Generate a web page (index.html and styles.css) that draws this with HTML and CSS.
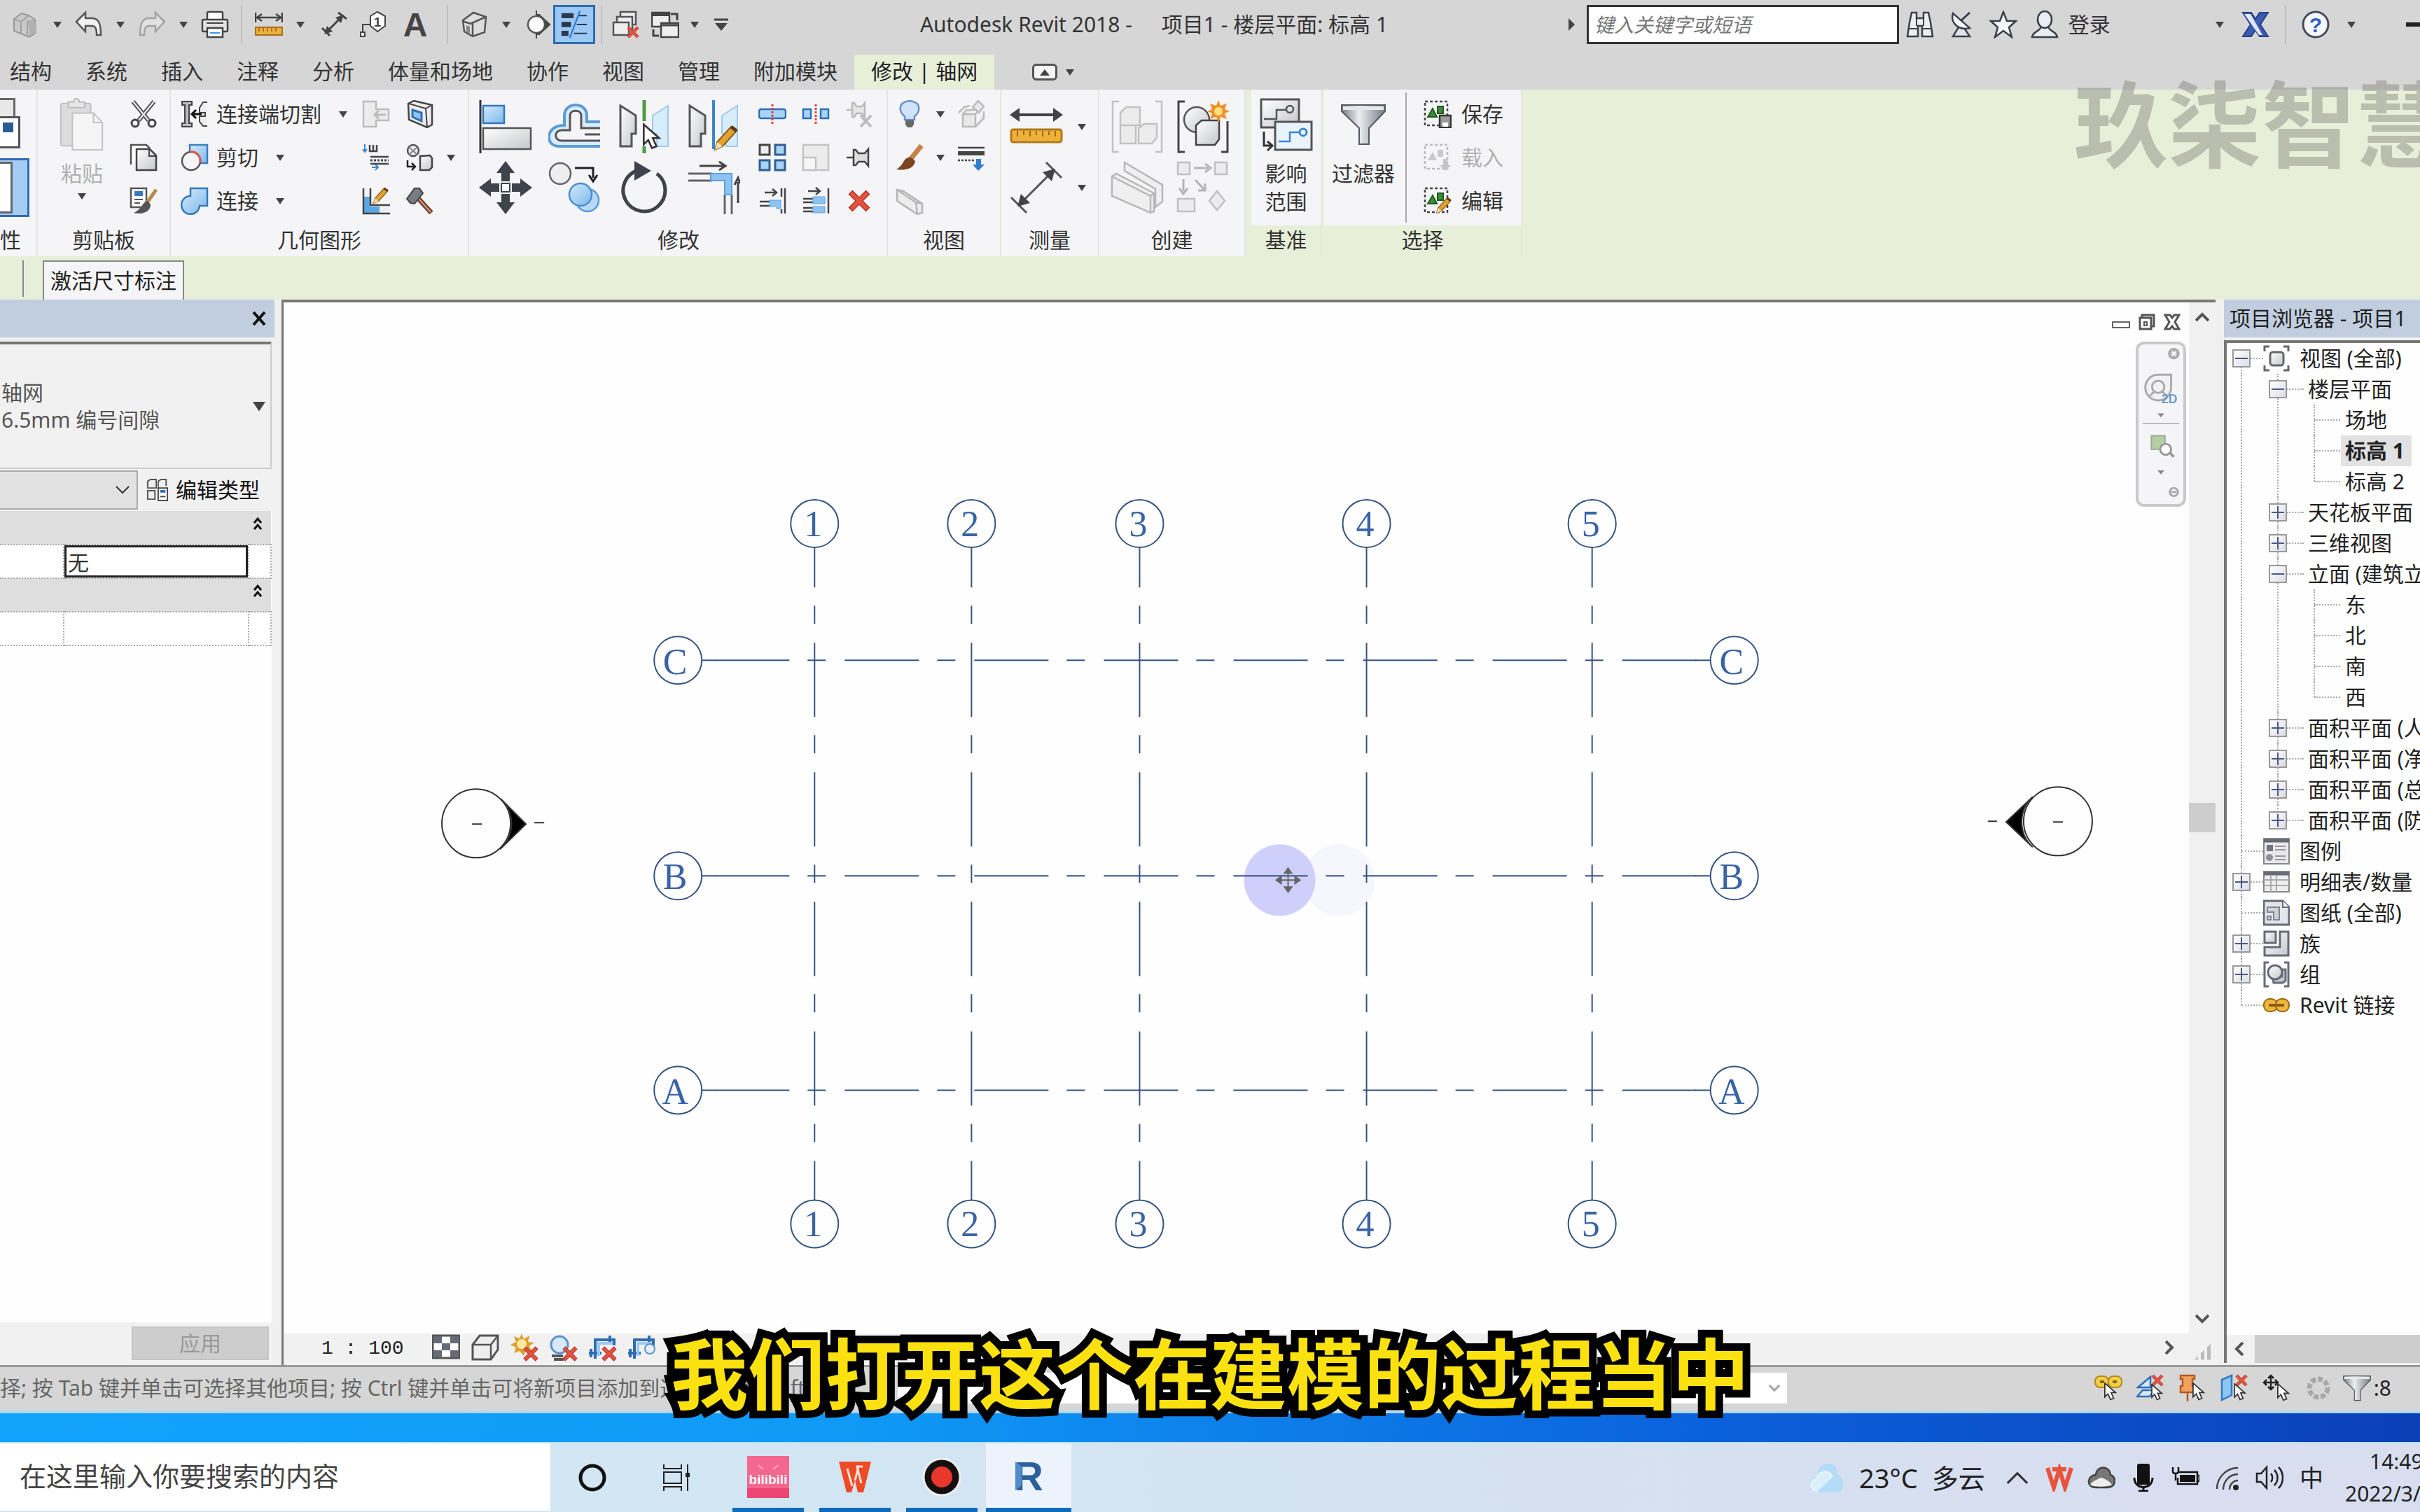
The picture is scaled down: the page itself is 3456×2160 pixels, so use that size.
FILE: index.html
```html
<!DOCTYPE html>
<html lang="zh-CN">
<head>
  <meta charset="UTF-8">
  <title>Autodesk Revit 2018 - 项目1 - 楼层平面: 标高 1</title>
  <link rel="stylesheet" href="styles.css">
</head>
<body>

<!-- icon sprite -->
<svg class="sprite">
  <defs>
    <linearGradient id="gr" x1="0" y1="0" x2="1" y2="1"><stop offset="0" stop-color="#fff"/><stop offset="1" stop-color="#c4c7cc"/></linearGradient>
    <linearGradient id="bl" x1="0" y1="0" x2="1" y2="1"><stop offset="0" stop-color="#d3ebfb"/><stop offset="1" stop-color="#7db9ea"/></linearGradient>
    <linearGradient id="me" x1="0" y1="0" x2="1" y2="0"><stop offset="0" stop-color="#777c85"/><stop offset=".4" stop-color="#eceef0"/><stop offset="1" stop-color="#777c85"/></linearGradient>

    <symbol id="caret" viewBox="0 0 12 12"><path d="M0 2h12L6 11z" fill="#444"/></symbol>
    <symbol id="pointer" viewBox="0 0 20 30"><path d="M1 1v22l5-5 4 9 5-2-4-9h7z" fill="#fff" stroke="#333" stroke-width="2"/></symbol>
    <symbol id="cross" viewBox="0 0 20 20"><path d="M4 1l6 6 6-6 3 3-6 6 6 6-3 3-6-6-6 6-3-3 6-6-6-6z" fill="#e2543f" stroke="#b9342a"/></symbol>
    <symbol id="pencil" viewBox="0 0 40 40"><path d="M4 36l3-11L27 3l8 6-20 22z" fill="#e2a42c" stroke="#8a5a1c" stroke-width="2"/><path d="M4 36l3-11 8 6z" fill="#f6dcae"/><path d="M27 3l8 6" stroke="#5f3b1d" stroke-width="5"/></symbol>

    <symbol id="cube" viewBox="0 0 40 40"><path d="M3 12l11-8 10 3 9 6v20l-8 5-10-4-12-5z" fill="#c9c9c9" stroke="#999" stroke-width="2"/><path d="M3 12l10 4v18M13 16l11-9M22 14v22M22 18l11-5" fill="none" stroke="#a3a3a3" stroke-width="2"/><path d="M23 14l12 5v13l-10 5z" fill="#b0b0b0"/></symbol>
    <symbol id="undo" viewBox="0 0 40 40"><path d="M2 16L15 3v8h9c9 0 13 6 13 24h-6c0-10-2-13-7-13h-9v8z" fill="#f2f2f2" stroke="#555" stroke-width="2.500"/></symbol>
    <symbol id="printer" viewBox="0 0 40 40"><rect x="9" y="2" width="22" height="14" rx="2" fill="#fff" stroke="#444" stroke-width="2.500"/><rect x="2" y="13" width="36" height="17" rx="2" fill="#e3e3e3" stroke="#444" stroke-width="2.500"/><path d="M8 18h24" stroke="#444" stroke-width="2"/><rect x="9" y="25" width="22" height="13" fill="#fff" stroke="#444" stroke-width="2.500"/><path d="M13 32h14" stroke="#39f" stroke-width="2"/></symbol>
    <symbol id="measure" viewBox="0 0 40 40"><path d="M4 10h32M10 5l-7 5 7 5M30 5l7 5-7 5M1 3v14M39 3v14" fill="none" stroke="#444" stroke-width="2.500"/><rect x="1" y="24" width="38" height="11" fill="#edb13c" stroke="#a8701b" stroke-width="2"/><path d="M6 25v5M12 25v5M18 25v5M24 25v5M30 25v5" stroke="#a8701b" stroke-width="2"/></symbol>
    <symbol id="dim" viewBox="0 0 40 40"><path d="M9 31L31 9M3 25l11 11M26 3l12 9" stroke="#444" stroke-width="3"/><path d="M6 34l4-12 8 8zM34 6l-4 12-8-8z" fill="#444"/></symbol>
    <symbol id="tag" viewBox="0 0 40 40"><path d="M26 2l11 6v14l-11 8-10-8V8z" fill="#fff" stroke="#444" stroke-width="2"/><text x="26" y="23" class="glyph" font-size="19" fill="#444">1</text><path d="M16 20H5v12" fill="none" stroke="#444" stroke-width="2"/><rect x="2" y="31" width="6" height="6" fill="#fff" stroke="#444" stroke-width="2"/></symbol>
    <symbol id="bigA" viewBox="0 0 40 40"><text x="20" y="37" class="glyph" font-size="48" fill="#444">A</text></symbol>
    <symbol id="house" viewBox="0 0 40 40"><path d="M3 14L18 3l18 6-2 22-17 6-12-7z" fill="#ddd" stroke="#555" stroke-width="2.500"/><path d="M2 15l12 4L36 9M17 18v18" fill="none" stroke="#555" stroke-width="2.500"/><path d="M8 21l5 2v10l-5-3z" fill="#888"/></symbol>
    <symbol id="section" viewBox="0 0 40 40"><path d="M18 0v6h4l15 14-15 14h-4v6" fill="#444" stroke="#444" stroke-width="2"/><circle cx="18" cy="20" r="12" fill="#fff" stroke="#555" stroke-width="2.500"/></symbol>
    <symbol id="thin" viewBox="0 0 44 44"><path d="M2 8h19M2 22h15M2 36h11" stroke="#2b3950" stroke-width="8"/><path d="M29 8h13M26 22h16M22 36h20" stroke="#2b3950" stroke-width="2"/><path d="M31 1L15 43" stroke="#2f7dd1" stroke-width="2.500"/></symbol>
    <symbol id="closewin" viewBox="0 0 40 40"><rect x="12" y="2" width="22" height="18" fill="#eee" stroke="#555" stroke-width="2.500"/><rect x="7" y="9" width="22" height="18" fill="#eee" stroke="#555" stroke-width="2.500"/><rect x="2" y="17" width="22" height="18" fill="#eee" stroke="#555" stroke-width="2.500"/><use href="#cross" x="21" y="22" width="18" height="18"/></symbol>
    <symbol id="switchwin" viewBox="0 0 40 40"><rect x="1" y="3" width="25" height="20" fill="#eee" stroke="#444" stroke-width="2.500"/><path d="M1 6h25" stroke="#444" stroke-width="4"/><rect x="14" y="18" width="25" height="20" fill="#eee" stroke="#444" stroke-width="2.500"/><path d="M14 21h25M28 5h9v9M3 27v9h8" fill="none" stroke="#444" stroke-width="3"/></symbol>
    <symbol id="custom" viewBox="0 0 20 20"><path d="M0 3h20" stroke="#444" stroke-width="3"/><path d="M1 8h18l-9 11z" fill="#444"/></symbol>
    <symbol id="binoc" viewBox="0 0 40 40"><path d="M8 3h7v8h10V3h7l3 14 3 20H23V22h-6v15H2l3-20z" fill="#eee" stroke="#3b4049" stroke-width="2.500"/><path d="M3 26h14M23 26h14M15 12v10M25 12v10" stroke="#3b4049" stroke-width="2"/></symbol>
    <symbol id="dish" viewBox="0 0 40 40"><path d="M16 24L8 37h24l-8-12" fill="#dfe3ea" stroke="#3b4049" stroke-width="2.500"/><path d="M8 4c-4 14 8 25 24 21z" fill="#f5f7fb" stroke="#3b4049" stroke-width="2.500"/><path d="M20 14l12-11" stroke="#3b4049" stroke-width="3"/></symbol>
    <symbol id="star" viewBox="0 0 40 40"><path d="M20 2l5 13h13L28 24l4 14-12-9-12 9 4-14L2 15h13z" fill="#f4f5f7" stroke="#3b4049" stroke-width="2.500"/></symbol>
    <symbol id="user" viewBox="0 0 40 40"><path d="M15 22c0 8-12 7-13 16h36c-1-9-13-8-13-16" fill="#e9edf3" stroke="#3b4049" stroke-width="2.500"/><ellipse cx="20" cy="13" rx="10" ry="12" fill="#e9edf3" stroke="#3b4049" stroke-width="2.500"/></symbol>
    <symbol id="exch" viewBox="0 0 40 40"><path d="M2 3h12l6 9 6-9h12L27 20l11 17H26l-6-9-6 9H2l11-17z" fill="#3b5bb0" stroke="#27408a" stroke-width="2"/><path d="M4 5h9l17 30h-5z" fill="#dfe7f8"/></symbol>
    <symbol id="help" viewBox="0 0 40 40"><circle cx="20" cy="20" r="18" fill="#f4f7fc" stroke="#454b57" stroke-width="3"/><text x="20" y="31" class="glyph" font-size="30" fill="#2d5ec4">?</text></symbol>

    <symbol id="paste" viewBox="0 0 64 78"><rect x="1" y="8" width="44" height="62" rx="3" fill="#dcdcdc" stroke="#c2c2c2" stroke-width="2"/><path d="M12 14V6h8c0-7 8-7 8 0h8v8z" fill="#e6e6e6" stroke="#bbb" stroke-width="2"/><path d="M18 22h31l13 14v40H18z" fill="#f5f5f5" stroke="#c2c2c2" stroke-width="2"/><path d="M49 22v14h13" fill="none" stroke="#c2c2c2" stroke-width="2"/></symbol>
    <symbol id="cut" viewBox="0 0 40 40"><path d="M5 2l22 27M35 2L13 29" stroke="#555" stroke-width="6"/><path d="M5 2l22 27M35 2L13 29" stroke="#eee" stroke-width="2"/><circle cx="8" cy="33" r="5" fill="none" stroke="#444" stroke-width="3"/><circle cx="32" cy="33" r="5" fill="none" stroke="#444" stroke-width="3"/></symbol>
    <symbol id="copy" viewBox="0 0 40 40"><path d="M2 30V2h22l5 5" fill="#fff" stroke="#555" stroke-width="2.500"/><path d="M10 8h19l9 9v21H10z" fill="url(#gr)" stroke="#444" stroke-width="2.500"/><path d="M28 8v10h10" fill="none" stroke="#444" stroke-width="2"/></symbol>
    <symbol id="match" viewBox="0 0 40 40"><rect x="2" y="2" width="22" height="27" fill="#fff" stroke="#555" stroke-width="2.500"/><rect x="7" y="6" width="12" height="7" fill="#3a76c4"/><path d="M7 18h12M7 23h8" stroke="#555" stroke-width="2"/><path d="M38 4L24 24" stroke="#b98a4a" stroke-width="5"/><path d="M26 20c-7 0-8 12-20 17 10 3 24 0 24-12z" fill="#555"/></symbol>
    <symbol id="cope" viewBox="0 0 40 40"><path d="M2 2h14v5h-4v26h4v5H2v-5h4V7H2z" fill="#bbb" stroke="#444" stroke-width="2"/><path d="M38 3h-6l-5 8v7h8v5h-8v8l5 6h6" fill="#eee" stroke="#444" stroke-width="2"/><path d="M30 20H17M22 14l-6 6 6 6" fill="none" stroke="#111" stroke-width="3"/></symbol>
    <symbol id="cutgeo" viewBox="0 0 40 40"><path d="M13 2h25v26H13z" fill="url(#bl)" stroke="#3d7fc0" stroke-width="2.500"/><circle cx="15" cy="25" r="13" fill="#f5f5f7" stroke="#555" stroke-width="2.500"/><path d="M13 12a13 13 0 0 1 15 15" fill="none" stroke="#e0564f" stroke-width="3"/></symbol>
    <symbol id="join" viewBox="0 0 40 40"><path d="M14 2h24v25H27a13 13 0 1 1-13-14z" fill="url(#bl)" stroke="#3677b8" stroke-width="2.500"/></symbol>
    <symbol id="split" viewBox="0 0 40 40"><path d="M2 2h18v11h18v16H20v9H2z" fill="#ececec" stroke="#bdbdbd" stroke-width="2.500"/><path d="M34 21H18M24 15l-6 6 6 6" fill="none" stroke="#bdbdbd" stroke-width="3"/></symbol>
    <symbol id="wallopen" viewBox="0 0 40 40"><path d="M4 5l8-4 26 6v28l-7 4L5 28z" fill="#eee" stroke="#444" stroke-width="2.500"/><path d="M5 5l24 7 2 26M29 12l9-5" fill="none" stroke="#444" stroke-width="2"/><path d="M10 14l13 4v12l-13-6z" fill="#8fc4ef" stroke="#2f6fb5" stroke-width="3"/></symbol>
    <symbol id="beam" viewBox="0 0 40 40"><path d="M4 1v10M1 8l3 4 3-4M14 34h8M19 30l4 4-4 4" fill="none" stroke="#3c86cf" stroke-width="2"/><path d="M11 2v9h10V2M16 2v9" fill="none" stroke="#444" stroke-width="2.500"/><path d="M12 19h26M12 29h26" stroke="#444" stroke-width="2.500"/><path d="M12 24h26" stroke="#444" stroke-width="3" stroke-dasharray="3 2"/></symbol>
    <symbol id="paintface" viewBox="0 0 40 40"><circle cx="11" cy="10" r="8" fill="#eee" stroke="#555" stroke-width="2.500"/><path d="M5 5l12 11M5 16L17 5" stroke="#888" stroke-width="2"/><path d="M21 18l14-1 3 4v13l-4 4H21z" fill="url(#gr)" stroke="#444" stroke-width="2.500"/><path d="M3 24v9h10M9 28l5 5-5 5" fill="none" stroke="#222" stroke-width="2.500"/></symbol>
    <symbol id="walljoin" viewBox="0 0 40 40"><path d="M3 2h8v26h27v9H3z" fill="#f0f0f0"/><path d="M3 14h8v14h14v9H3z" fill="#5ba7e6"/><path d="M2 2v36h38M12 2v24h28" fill="none" stroke="#444" stroke-width="2.500"/><use href="#pencil" x="14" y="0" width="26" height="26"/></symbol>
    <symbol id="hammer" viewBox="0 0 40 40"><path d="M17 15l20 22" stroke="#6f3f2a" stroke-width="7"/><path d="M18 16l18 20" stroke="#d0a08a" stroke-width="2"/><path d="M2 17L13 2h7l5 7-12 15-6-1z" fill="#777b82" stroke="#444" stroke-width="2"/></symbol>

    <symbol id="align" viewBox="0 0 76 76"><path d="M2 0v76" stroke="#333" stroke-width="3"/><rect x="6" y="8" width="30" height="25" fill="url(#bl)" stroke="#3277ba" stroke-width="2.500"/><rect x="6" y="40" width="68" height="30" fill="url(#gr)" stroke="#555" stroke-width="2.500"/></symbol>
    <symbol id="offset" viewBox="0 0 76 76"><path d="M74 31H55V22C55 2 23 2 23 22v14c-28 0-28 30-8 30h59" fill="#d9ecfb" stroke="#5b9bd8" stroke-width="4"/><path d="M74 40H47V22c0-9-16-9-16 0v21H19c-11 0-11 15 0 15h55M74 49H52" fill="#f5f5f7" stroke="#555" stroke-width="3"/></symbol>
    <symbol id="mirrorpick" viewBox="0 0 76 76"><path d="M4 8l22 14v26h-6v18H4z" fill="url(#gr)" stroke="#555" stroke-width="3"/><path d="M72 8L50 22v26h6v18h16z" fill="#d8edfb" stroke="#9ccaf0" stroke-width="2"/><path d="M38 0v30M38 66v10" stroke="#4c9b45" stroke-width="5"/><use href="#pointer" x="36" y="32" width="26" height="42"/></symbol>
    <symbol id="mirrordraw" viewBox="0 0 76 76"><path d="M4 8l22 14v26h-6v18H4z" fill="url(#gr)" stroke="#555" stroke-width="3"/><path d="M72 8L50 22v26h6v18h16z" fill="#d8edfb" stroke="#9ccaf0" stroke-width="2"/><path d="M38 0v70" stroke="#3c86cf" stroke-width="4"/><use href="#pencil" x="36" y="34" width="40" height="42"/></symbol>
    <symbol id="move" viewBox="0 0 76 76"><path d="M38 0l13 17h-7v12H32V17h-7zM38 76l13-17h-7V47H32v12h-7zM0 38l17-13v7h12v12H17v7zM76 38L59 25v7H47v12h12v7z" fill="#3f434b"/><rect x="32" y="32" width="12" height="12" fill="#fff" stroke="#3f434b" stroke-width="2"/></symbol>
    <symbol id="copyel" viewBox="0 0 76 76"><circle cx="17" cy="18" r="15" fill="#eee" stroke="#666" stroke-width="2.500"/><path d="M38 10h26v14M58 20l6 9 6-9" fill="none" stroke="#222" stroke-width="3"/><circle cx="56" cy="56" r="16" fill="#b9daf5" stroke="#5a9ad4" stroke-width="2.500"/><circle cx="46" cy="48" r="16" fill="url(#bl)" stroke="#4a8fd0" stroke-width="2.500"/></symbol>
    <symbol id="rotate" viewBox="0 0 76 76"><path d="M56 18A30 30 0 1 1 30 13" fill="none" stroke="#3f434b" stroke-width="5"/><path d="M24 0l24 14-24 14z" fill="#3f434b"/></symbol>
    <symbol id="trimcorner" viewBox="0 0 76 76"><path d="M2 18h34M2 28h34M54 48v28M64 48v28" stroke="#666" stroke-width="3"/><path d="M34 18h30v30H54V28H34z" fill="#8cc3f1" stroke="#5aa0e0" stroke-width="2"/><path d="M18 7h34M46 1l9 6-9 6M73 60V30M68 34l5-10 3 8" fill="none" stroke="#444" stroke-width="3"/></symbol>
    <symbol id="splitel" viewBox="0 0 40 40"><rect x="1" y="13" width="38" height="13" rx="3" fill="#a9d3f5" stroke="#2f6fb5" stroke-width="2.500"/><path d="M20 6v28" stroke="#d7443e" stroke-width="3" stroke-dasharray="3 2"/></symbol>
    <symbol id="splitgap" viewBox="0 0 40 40"><rect x="2" y="13" width="11" height="13" fill="#a9d3f5" stroke="#2f6fb5" stroke-width="2.500"/><rect x="27" y="13" width="11" height="13" fill="#a9d3f5" stroke="#2f6fb5" stroke-width="2.500"/><path d="M20 6v28" stroke="#d7443e" stroke-width="3" stroke-dasharray="3 2"/></symbol>
    <symbol id="unpin" viewBox="0 0 40 40"><path d="M2 14h8M10 4v20h3l3-5h8l4 5V4l-4 5h-8l-3-5z" fill="#e6e6e6" stroke="#bbb" stroke-width="2.500"/><path d="M22 22l15 16M37 22L22 38" stroke="#bdbdbd" stroke-width="4"/></symbol>
    <symbol id="pin" viewBox="0 0 40 40"><path d="M2 20h10M12 9v22h3l4-5h9l5 6V8l-5 6h-9l-4-5z" fill="#ddd" stroke="#444" stroke-width="2.500"/></symbol>
    <symbol id="array" viewBox="0 0 40 40"><rect x="2" y="2" width="14" height="14" fill="#eee" stroke="#444" stroke-width="3"/><g fill="#a9d3f5" stroke="#2f5f93" stroke-width="3"><rect x="24" y="2" width="14" height="14"/><rect x="2" y="24" width="14" height="14"/><rect x="24" y="24" width="14" height="14"/></g></symbol>
    <symbol id="scale" viewBox="0 0 40 40"><path d="M2 2h36v36H2z" fill="#ececec" stroke="#c4c4c4" stroke-width="2.500"/><path d="M2 20h18v18H2z" fill="#f7f7f7" stroke="#c4c4c4" stroke-width="2.500"/></symbol>
    <symbol id="trim1" viewBox="0 0 40 40"><path d="M38 2v36M33 2v12M9 8h16M20 3l6 5-6 5M2 21h14M2 27h14M33 32v6" fill="none" stroke="#444" stroke-width="2.500"/><path d="M16 19h16v12h-6v-3H16z" fill="#8cc3f1" stroke="#5aa0e0"/></symbol>
    <symbol id="trim2" viewBox="0 0 40 40"><path d="M38 2v36M9 6h16M20 1l6 5-6 5M2 17h14M2 22h14M2 30h14M2 35h14" fill="none" stroke="#444" stroke-width="2.500"/><path d="M16 14h17v10H16zM16 28h17v9H16z" fill="#8cc3f1" stroke="#5aa0e0"/></symbol>
    <symbol id="bulb" viewBox="0 0 40 40"><path d="M20 1c-18 2-15 17-7 22v5h14v-5c8-5 11-20-7-22z" fill="#cfe3fb" stroke="#6a8fc6" stroke-width="2.500"/><path d="M14 29h12v6l-3 4h-6l-3-4z" fill="#666"/></symbol>
    <symbol id="brush" viewBox="0 0 40 40"><path d="M37 3L20 24" stroke="#c78247" stroke-width="7"/><path d="M22 20C11 18 12 32 1 37c12 2 26-1 27-12z" fill="#7b4522"/></symbol>
    <symbol id="hidebox" viewBox="0 0 40 40"><path d="M2 18l8-8 8-2M8 20h18v18H8zM8 20l5-6h13M26 20l4-5M22 10l8-9 8 8-7 9zM26 38l12-12V16" fill="#e8e8e8" stroke="#bbb" stroke-width="2.500"/></symbol>
    <symbol id="linework" viewBox="0 0 40 40"><path d="M1 6h38" stroke="#444" stroke-width="2.500"/><path d="M1 14h38" stroke="#444" stroke-width="6"/><path d="M1 24h24" stroke="#444" stroke-width="2.500" stroke-dasharray="3 2"/><path d="M27 22h7v8h5l-9 9-8-9h5z" fill="#2f7dd1"/></symbol>
    <symbol id="sect" viewBox="0 0 40 40"><path d="M2 4l9 2 27 18v13l-7 2L2 20zM2 4l27 18 9 2M29 22l2 17" fill="#ededed" stroke="#b5b5b5" stroke-width="2.500"/></symbol>
    <symbol id="ruler" viewBox="0 0 76 60"><path d="M6 13h64" stroke="#444" stroke-width="4"/><path d="M0 13L14 3v20zM76 13L62 3v20z" fill="#444"/><rect x="2" y="34" width="72" height="18" rx="3" fill="#efb13a" stroke="#b07a1c" stroke-width="3"/><path d="M11 36v8M20 36v6M29 36v8M38 36v6M47 36v8M56 36v6M65 36v8" stroke="#9a6916" stroke-width="2"/></symbol>
    <symbol id="aligned" viewBox="0 0 76 76"><path d="M15 61L61 15M2 52l22 22M52 2l22 22" stroke="#555" stroke-width="3"/><path d="M11 65l5-18 13 13zM65 11l-5 18-13-13z" fill="#444"/></symbol>
    <symbol id="assembly" viewBox="0 0 76 76"><path d="M12 2H3v72h9M64 2h9v72h-9" fill="none" stroke="#c2c2c2" stroke-width="2.500"/><path d="M14 18l8-8h20v26H14zM14 36h22v26H14zM40 40l8-6h18v20l-7 8H40z" fill="#ececec" stroke="#c2c2c2" stroke-width="2.500"/></symbol>
    <symbol id="group" viewBox="0 0 76 76"><path d="M12 2H3v72h9M64 74h9V30" fill="none" stroke="#444" stroke-width="3"/><circle cx="29" cy="28" r="18" fill="url(#gr)" stroke="#555" stroke-width="2.500"/><path d="M28 36l8-7h25v27l-6 8H28z" fill="url(#gr)" stroke="#444" stroke-width="2.500"/><path d="M60 0l3 8 9-3-3 8 7 3-7 3 3 8-9-3-3 8-3-8-9 3 3-8-7-3 7-3-3-8 9 3z" fill="#f0902a"/><circle cx="60" cy="16" r="6" fill="#ffe27a"/></symbol>
    <symbol id="parts" viewBox="0 0 76 76"><path d="M20 2l54 32v24l-10 8V40L20 14z" fill="#efefef" stroke="#b8b8b8" stroke-width="2.500"/><path d="M2 22l6-4 54 28v26l-5 2L2 50zM2 22l55 28v24M57 50l5-4" fill="#efefef" stroke="#b8b8b8" stroke-width="2.500"/></symbol>
    <symbol id="similar" viewBox="0 0 76 76"><path d="M2 2h17v17H2zM55 2h17v17H55zM2 54h24v18H2zM58 43l11 14-11 13-11-13z" fill="#ececec" stroke="#c0c0c0" stroke-width="2.500"/><path d="M25 10h20M41 4l8 6-8 6M10 26v17M4 39l6 8 6-8M27 27l13 14M41 32v10h-10" fill="none" stroke="#b5b5b5" stroke-width="3"/></symbol>
    <symbol id="propagate" viewBox="0 0 76 76"><rect x="2" y="2" width="54" height="40" fill="url(#gr)" stroke="#555" stroke-width="3"/><path d="M6 30h18V17h14" fill="none" stroke="#555" stroke-width="2.500"/><circle cx="43" cy="16" r="5" fill="none" stroke="#555" stroke-width="2.500"/><rect x="22" y="34" width="52" height="40" fill="#e9f3fc" stroke="#555" stroke-width="3"/><path d="M27 62h16V49h15" fill="none" stroke="#3c86cf" stroke-width="2.500"/><circle cx="62" cy="49" r="5" fill="none" stroke="#3c86cf" stroke-width="3"/><path d="M6 48v20h10M11 62l7 6-7 7" fill="none" stroke="#333" stroke-width="3"/></symbol>
    <symbol id="filter" viewBox="0 0 64 60"><path d="M1 2h62v9L40 35v23H26V35L1 11z" fill="url(#me)" stroke="#565a62" stroke-width="2"/><path d="M3 4h58v5H3z" fill="#e7e9ec"/></symbol>
    <symbol id="selset" viewBox="0 0 40 40"><path d="M2 2h32v34H2z" fill="none" stroke="#444" stroke-width="2.500" stroke-dasharray="4 3"/><path d="M6 24l7-12 6 12zM20 9h8v10h-8z" fill="#3b8d35" stroke="#1f5a1d" stroke-width="2"/></symbol>
    <symbol id="save" viewBox="0 0 40 40"><use href="#selset"/><rect x="23" y="22" width="16" height="17" fill="#999" stroke="#333" stroke-width="2.500"/><path d="M27 32h8v6h-8z" fill="#fff"/></symbol>
    <symbol id="load" viewBox="0 0 40 40"><path d="M2 2h32v34H2z" fill="none" stroke="#bbb" stroke-width="2.500" stroke-dasharray="4 3"/><path d="M6 24l7-12 6 12zM20 9h8v10h-8z" fill="#c9c9c9"/><path d="M28 22h6v9h5l-8 8-8-8h5z" fill="#c4c4c4"/></symbol>
    <symbol id="editset" viewBox="0 0 40 40"><use href="#selset"/><use href="#pencil" x="16" y="14" width="26" height="26"/></symbol>

    <symbol id="edittype" viewBox="0 0 34 34"><path d="M2 4l4-3h9v13H2zM18 14V4l4-3h8v10M2 18h11v13H2z" fill="#eee" stroke="#555" stroke-width="2"/><rect x="18" y="14" width="14" height="19" fill="#fff" stroke="#444" stroke-width="2"/><path d="M21 19h8" stroke="#2f6fb5" stroke-width="4"/><path d="M21 27h8" stroke="#444" stroke-width="2"/></symbol>
    <symbol id="dblup" viewBox="0 0 12 20"><path d="M1 9l5-6 5 6M1 18l5-6 5 6" fill="none" stroke="#111" stroke-width="3"/></symbol>
    <symbol id="x" viewBox="0 0 20 20"><path d="M2 1l16 18M18 1L2 19" stroke="#111" stroke-width="4"/></symbol>
    <symbol id="up" viewBox="0 0 20 14"><path d="M1 12L10 3l9 9" fill="none" stroke="#555" stroke-width="4"/></symbol>
    <symbol id="upthin" viewBox="0 0 20 14"><path d="M1 12L10 3l9 9" fill="none" stroke="#333" stroke-width="2"/></symbol>

    <symbol id="t-view" viewBox="0 0 38 38"><path d="M2 9V2h7M29 2h7v7M36 29v7h-7M9 36H2v-7" fill="none" stroke="#666" stroke-width="3"/><rect x="10" y="10" width="19" height="19" rx="4" fill="url(#gr)" stroke="#666" stroke-width="3"/></symbol>
    <symbol id="t-legend" viewBox="0 0 38 38"><rect x="1" y="1" width="36" height="36" fill="#e9e9ec" stroke="#888" stroke-width="2"/><path d="M1 4h36" stroke="#666b76" stroke-width="5"/><rect x="5" y="10" width="9" height="9" fill="#70757f"/><circle cx="9" cy="28" r="5" fill="#8a8f98"/><path d="M17 12h15M17 17h15M17 26h15M17 31h15" stroke="#999" stroke-width="2"/></symbol>
    <symbol id="t-sched" viewBox="0 0 38 38"><rect x="1" y="4" width="36" height="29" fill="#eeeef0" stroke="#888" stroke-width="2"/><path d="M1 7h36" stroke="#666b76" stroke-width="5"/><path d="M1 16h36M1 24h36M11 9v24M19 9v24" stroke="#aaa" stroke-width="2"/></symbol>
    <symbol id="t-sheet" viewBox="0 0 38 38"><path d="M1 2h27l9 9v25H1z" fill="#e3e6ea" stroke="#666b76" stroke-width="3"/><path d="M28 2v9h9" fill="#fff" stroke="#666b76" stroke-width="2"/><path d="M6 11h17v18h-8V18H6zM6 24h5v5H6z" fill="#cfd3d9" stroke="#80858f" stroke-width="2"/></symbol>
    <symbol id="t-fam" viewBox="0 0 38 38"><rect x="2" y="2" width="16" height="16" fill="url(#gr)" stroke="#666b76" stroke-width="3"/><path d="M24 2h12v34H2V24h22z" fill="url(#gr)" stroke="#666b76" stroke-width="3"/></symbol>
    <symbol id="t-group" viewBox="0 0 38 38"><path d="M8 2H2v34h6M30 2h6v34h-6" fill="none" stroke="#666b76" stroke-width="3"/><path d="M13 22h14V12h5v16l-4 3H15z" fill="#c5c9cf" stroke="#666b76" stroke-width="3"/><circle cx="17" cy="16" r="10" fill="url(#gr)" stroke="#666b76" stroke-width="3"/></symbol>
    <symbol id="t-link" viewBox="0 0 38 38"><rect x="1" y="10" width="19" height="18" rx="8" fill="#eeb63e" stroke="#9b6a14" stroke-width="2"/><rect x="18" y="10" width="19" height="18" rx="8" fill="#eeb63e" stroke="#9b6a14" stroke-width="2"/><path d="M8 19h22" stroke="#8a5c10" stroke-width="4"/></symbol>

    <symbol id="v-detail" viewBox="0 0 40 40"><rect x="1" y="3" width="38" height="32" fill="#fff" stroke="#555" stroke-width="3"/><path d="M2 4h12v10H2zM26 4h12v10H26zM14 14h12v10H14zM2 24h12v10H2zM26 24h12v10H26z" fill="#666b75"/></symbol>
    <symbol id="v-box" viewBox="0 0 40 40"><path d="M2 16L12 3h26v20L28 37H2z" fill="#eee" stroke="#555" stroke-width="3"/><path d="M2 16h26v21M28 16L38 3" fill="none" stroke="#555" stroke-width="2.500"/></symbol>
    <symbol id="v-sun" viewBox="0 0 40 40"><path d="M16 0l3 8 8-5-2 9 9 1-7 5 4 8-9-2-3 8-6-7-8 3 3-8-8-4 8-4-3-8 8 3z" fill="#d9a02c"/><circle cx="16" cy="15" r="7" fill="#ffe9a0"/><use href="#cross" x="18" y="18" width="22" height="22"/></symbol>
    <symbol id="v-shadow" viewBox="0 0 40 40"><circle cx="14" cy="16" r="12" fill="#d6e8fa" stroke="#5e93cf" stroke-width="3"/><path d="M3 32h16M6 37h14" stroke="#555" stroke-width="4"/><use href="#cross" x="18" y="18" width="22" height="22"/></symbol>
    <symbol id="v-crop" viewBox="0 0 40 40"><path d="M9 36V9h27v8M0 28h18M30 3v12M3 22v12" fill="none" stroke="#2f6cb2" stroke-width="4"/><path d="M14 32V14h20" fill="none" stroke="#9ccaf0" stroke-width="4"/></symbol>

    <symbol id="s-move" viewBox="0 0 40 40"><path d="M12 2v20M2 12h20M8 6l4-4 4 4M8 18l4 4 4-4M6 8l-4 4 4 4M18 8l4 4-4 4" fill="none" stroke="#222" stroke-width="2.500"/><use href="#pointer" x="21" y="13" width="18" height="27"/></symbol>
    <symbol id="s-link" viewBox="0 0 40 40"><rect x="1" y="3" width="19" height="16" rx="7" fill="#f2cf4a" stroke="#b38a1b" stroke-width="2"/><rect x="20" y="3" width="19" height="16" rx="7" fill="#f2cf4a" stroke="#b38a1b" stroke-width="2"/><path d="M8 11h6M26 11h6" stroke="#8a6a14" stroke-width="4"/><use href="#pointer" x="14" y="12" width="18" height="27"/></symbol>
    <symbol id="s-under" viewBox="0 0 40 40"><path d="M2 19L20 4v15zM1 32l8-9h16l-6 9z" fill="#d2e8fa" stroke="#2f6fb5" stroke-width="2.500"/><use href="#cross" x="21" y="0" width="18" height="18"/><use href="#pointer" x="21" y="14" width="17" height="25"/></symbol>
    <symbol id="s-pin" viewBox="0 0 40 40"><path d="M3 2h20v5h-3v10h3v9H3v-9h3V7H3zM13 26v13" fill="#f2a25e" stroke="#b4581c" stroke-width="2.500"/><use href="#pointer" x="20" y="12" width="18" height="27"/></symbol>
    <symbol id="s-face" viewBox="0 0 40 40"><path d="M2 8l14-6v28L2 37z" fill="#8dc6f4" stroke="#2f7dc4" stroke-width="2.500"/><use href="#cross" x="21" y="0" width="18" height="18"/><use href="#pointer" x="19" y="13" width="18" height="26"/></symbol>
    <symbol id="s-busy" viewBox="0 0 40 40"><circle cx="20" cy="20" r="13" fill="none" stroke="#a8a8a8" stroke-width="7" stroke-dasharray="7 3"/></symbol>

    <symbol id="wps" viewBox="0 0 48 48"><path d="M1 2h46l-11 44h-8l-4-17-5 17h-7z" fill="#ee4a26"/><path d="M13 12l7 25M35 9h-8l6 24M24 29l5-20" fill="none" stroke="#ffe3d6" stroke-width="3"/></symbol>
    <symbol id="wps-s" viewBox="0 0 40 40"><path d="M3 6l9 28 8-26 8 26 9-28M10 8h20" fill="none" stroke="#e8533c" stroke-width="6"/></symbol>
    <symbol id="cloud" viewBox="0 0 54 50"><path d="M14 48c-17 0-16-24-1-24C12-4 48-3 44 20c14 4 12 28 0 28z" fill="#b4dcf8"/><path d="M14 46c-14 0-13-19-1-19 2-16 22-14 23-2" fill="#d9effc" stroke="#e6f5ff" stroke-width="3"/></symbol>
    <symbol id="cloud2" viewBox="0 0 40 40"><path d="M12 34c-14 0-13-17 0-18 1-14 20-14 21 0 9 2 8 18-3 18z" fill="#777" stroke="#444" stroke-width="2.500"/><path d="M4 30c3 3 22 4 31 0-2-4-10-9-16-10-6 3-12 5-15 10z" fill="#eee"/></symbol>
    <symbol id="mic" viewBox="0 0 40 40"><rect x="11" y="0" width="18" height="30" rx="3" fill="#111"/><path d="M7 20c0 18 26 18 26 0M20 33v6M13 39h14" fill="none" stroke="#111" stroke-width="3"/></symbol>
    <symbol id="battery" viewBox="0 0 40 40"><path d="M11 12h26v17H9V20M37 17h3v8h-3" fill="none" stroke="#111" stroke-width="2.500"/><rect x="12" y="16" width="22" height="10" fill="#111"/><path d="M2 5v6c0 4 8 4 8 0V5M6 14v10" fill="none" stroke="#111" stroke-width="2.500"/></symbol>
    <symbol id="wifi" viewBox="0 0 40 40"><path d="M5 36C5 20 18 6 35 6M14 37c0-12 9-22 21-22M23 37c0-7 5-13 12-13" fill="none" stroke="#444" stroke-width="2.500"/><circle cx="32" cy="34" r="4" fill="#222"/></symbol>
    <symbol id="volume" viewBox="0 0 40 40"><path d="M2 14h6l8-9v30l-8-9H2zM22 14c3 3 3 9 0 12M27 9c6 6 6 16 0 22M33 5c8 8 8 22 0 30" fill="none" stroke="#222" stroke-width="2.500"/></symbol>
  </defs>
</svg>

<header>
  <div class="titlebar">
    <div class="quick">
      <button class="w45"><svg><use href="#cube"/></svg></button>
      <button class="w45 caret"><svg><use href="#caret"/></svg></button>
      <button class="w45"><svg><use href="#undo"/></svg></button>
      <button class="w45 caret"><svg><use href="#caret"/></svg></button>
      <button class="w45 redo"><svg><use href="#undo"/></svg></button>
      <button class="w45 caret"><svg><use href="#caret"/></svg></button>
      <button class="w45"><svg><use href="#printer"/></svg></button>
      <span class="sep"></span>
      <button class="w45"><svg><use href="#measure"/></svg></button>
      <button class="w45 caret"><svg><use href="#caret"/></svg></button>
      <button class="w52"><svg><use href="#dim"/></svg></button>
      <button class="w60"><svg><use href="#tag"/></svg></button>
      <button class="w60"><svg><use href="#bigA"/></svg></button>
      <span class="sep"></span>
      <button class="w45"><svg><use href="#house"/></svg></button>
      <button class="w45 caret"><svg><use href="#caret"/></svg></button>
      <button class="w45"><svg><use href="#section"/></svg></button>
      <button class="w60 pressed"><svg><use href="#thin"/></svg></button>
      <span class="sep narrow"></span>
      <button class="w52"><svg><use href="#closewin"/></svg></button>
      <button class="w60"><svg><use href="#switchwin"/></svg></button>
      <button class="w24 caret"><svg><use href="#caret"/></svg></button>
      <button class="w52 custom"><svg><use href="#custom"/></svg></button>
    </div>
    <div class="title"><span>Autodesk Revit 2018 -</span><span>项目1 - 楼层平面: 标高 1</span></div>
    <div class="infocenter">
      <span class="tri"></span>
      <input type="text" class="keyword" placeholder="键入关键字或短语" aria-label="键入关键字或短语">
      <button class="w60"><svg><use href="#binoc"/></svg></button>
      <button class="w60"><svg><use href="#dish"/></svg></button>
      <button class="w60"><svg><use href="#star"/></svg></button>
      <button class="w60"><svg><use href="#user"/></svg></button>
      <button class="login">登录</button>
      <button class="w52 caret"><svg><use href="#caret"/></svg></button>
      <button class="w52"><svg><use href="#exch"/></svg></button>
      <span class="sep"></span>
      <button class="w52"><svg><use href="#help"/></svg></button>
      <button class="w52 caret"><svg><use href="#caret"/></svg></button>
      <button class="minimize" aria-label="最小化"></button>
    </div>
  </div>

  <nav class="tabs">
    <a href="#">结构</a><a href="#">系统</a><a href="#">插入</a><a href="#">注释</a><a href="#">分析</a><a href="#">体量和场地</a><a href="#">协作</a><a href="#">视图</a><a href="#">管理</a><a href="#">附加模块</a><a href="#" class="active">修改 | 轴网</a>
    <button class="collapse"><span></span></button>
    <button class="w24 caret"><svg><use href="#caret"/></svg></button>
  </nav>

  <div class="ribbon">
    <section class="panel p-prop">
      <div class="tools">
        <div class="halfcard"><i></i><b></b></div>
        <div class="halfcard on"><i></i></div>
      </div>
      <h2>性</h2>
    </section>

    <section class="panel p-clip">
      <div class="tools">
        <button class="big-label paste"><svg><use href="#paste"/></svg><span>粘贴</span><svg class="c"><use href="#caret"/></svg></button>
        <div class="col">
          <button><svg><use href="#cut"/></svg></button>
          <button><svg><use href="#copy"/></svg></button>
          <button><svg><use href="#match"/></svg></button>
        </div>
      </div>
      <h2>剪贴板</h2>
    </section>

    <section class="panel p-geo">
      <div class="tools">
        <div class="col labels">
          <button><svg><use href="#cope"/></svg>连接端切割<svg class="c"><use href="#caret"/></svg></button>
          <button><svg><use href="#cutgeo"/></svg>剪切<svg class="c"><use href="#caret"/></svg></button>
          <button><svg><use href="#join"/></svg>连接<svg class="c"><use href="#caret"/></svg></button>
        </div>
        <div class="col">
          <button><svg><use href="#split"/></svg></button>
          <button><svg><use href="#beam"/></svg></button>
          <button><svg><use href="#walljoin"/></svg></button>
        </div>
        <div class="col">
          <button><svg><use href="#wallopen"/></svg></button>
          <button><svg><use href="#paintface"/></svg></button>
          <button><svg><use href="#hammer"/></svg></button>
        </div>
        <div class="col carets">
          <span></span>
          <button><svg class="c"><use href="#caret"/></svg></button>
        </div>
      </div>
      <h2>几何图形</h2>
    </section>

    <section class="panel p-mod">
      <div class="tools">
        <div class="bigs">
          <button><svg><use href="#align"/></svg></button>
          <button><svg><use href="#offset"/></svg></button>
          <button><svg><use href="#mirrorpick"/></svg></button>
          <button><svg><use href="#mirrordraw"/></svg></button>
          <button><svg><use href="#move"/></svg></button>
          <button><svg><use href="#copyel"/></svg></button>
          <button><svg><use href="#rotate"/></svg></button>
          <button><svg><use href="#trimcorner"/></svg></button>
        </div>
        <div class="col">
          <button><svg><use href="#splitel"/></svg></button>
          <button><svg><use href="#array"/></svg></button>
          <button><svg><use href="#trim1"/></svg></button>
        </div>
        <div class="col">
          <button><svg><use href="#splitgap"/></svg></button>
          <button><svg><use href="#scale"/></svg></button>
          <button><svg><use href="#trim2"/></svg></button>
        </div>
        <div class="col">
          <button><svg><use href="#unpin"/></svg></button>
          <button><svg><use href="#pin"/></svg></button>
          <button><svg class="del"><use href="#cross"/></svg></button>
        </div>
      </div>
      <h2>修改</h2>
    </section>

    <section class="panel p-view">
      <div class="tools">
        <div class="col">
          <button><svg><use href="#bulb"/></svg></button>
          <button><svg><use href="#brush"/></svg></button>
          <button><svg><use href="#sect"/></svg></button>
        </div>
        <div class="col carets">
          <button><svg class="c"><use href="#caret"/></svg></button>
          <button><svg class="c"><use href="#caret"/></svg></button>
        </div>
        <div class="col">
          <button><svg><use href="#hidebox"/></svg></button>
          <button><svg><use href="#linework"/></svg></button>
        </div>
      </div>
      <h2>视图</h2>
    </section>

    <section class="panel p-meas">
      <div class="tools">
        <div class="bigs one">
          <button><svg><use href="#ruler"/></svg></button>
          <button><svg><use href="#aligned"/></svg></button>
        </div>
        <div class="bigs one narrow">
          <button><svg class="c"><use href="#caret"/></svg></button>
          <button><svg class="c"><use href="#caret"/></svg></button>
        </div>
      </div>
      <h2>测量</h2>
    </section>

    <section class="panel p-create">
      <div class="tools">
        <div class="bigs two">
          <button><svg><use href="#assembly"/></svg></button>
          <button><svg><use href="#group"/></svg></button>
          <button><svg><use href="#parts"/></svg></button>
          <button><svg><use href="#similar"/></svg></button>
        </div>
      </div>
      <h2>创建</h2>
    </section>

    <section class="panel p-datum ctx">
      <div class="tools">
        <button class="big-label"><svg><use href="#propagate"/></svg><span>影响<br>范围</span></button>
      </div>
      <h2>基准</h2>
    </section>

    <section class="panel p-sel ctx">
      <div class="tools">
        <button class="big-label filter"><svg><use href="#filter"/></svg><span>过滤器</span></button>
        <div class="col labels">
          <button><svg><use href="#save"/></svg>保存</button>
          <button disabled><svg><use href="#load"/></svg>载入</button>
          <button><svg><use href="#editset"/></svg>编辑</button>
        </div>
      </div>
      <h2>选择</h2>
    </section>
  </div>

  <div class="options">
    <button>激活尺寸标注</button>
  </div>
  <div class="watermark">玖柒智慧</div>
</header>

<main>
  <aside class="props">
    <div class="dockhead"><button aria-label="关闭"><svg><use href="#x"/></svg></button></div>
    <button class="typesel">
      <span>轴网<br>6.5mm 编号间隙</span>
      <svg><use href="#caret"/></svg>
    </button>
    <div class="instance">
      <select aria-label="实例"><option></option></select>
      <svg class="chev"><use href="#upthin"/></svg>
      <button><svg><use href="#edittype"/></svg>编辑类型</button>
    </div>
    <table>
      <colgroup><col class="name"><col><col class="assoc"></colgroup>
      <tr><th colspan="3"><svg><use href="#dblup"/></svg></th></tr>
      <tr><td></td><td class="val"><input type="text" value="无" aria-label="范围框"></td><td></td></tr>
      <tr><th colspan="3"><svg><use href="#dblup"/></svg></th></tr>
      <tr><td></td><td></td><td></td></tr>
    </table>
    <div class="blank"></div>
    <div class="apply"><button disabled>应用</button></div>
  </aside>

  <section class="view">
    <div class="canvas">
      <svg class="drawing" viewBox="405 432 2720 1472" preserveAspectRatio="xMidYMid slice">
        <!-- cursor highlight -->
        <circle cx="1912" cy="1257" r="51" fill="#f6f6ff"/>
        <circle cx="1827" cy="1257" r="51" fill="#cfcffc"/>
        <!-- grid lines -->
        <g class="grid dash">
          <path d="M1021 943H2422M1021 1251H2422M1021 1557H2422"/>
          <path stroke-dashoffset="48" d="M1163 781V1714"/>
          <path stroke-dashoffset="48" d="M1387 781V1714"/>
          <path stroke-dashoffset="48" d="M1627 781V1714"/>
          <path stroke-dashoffset="48" d="M1951 781V1714"/>
          <path stroke-dashoffset="48" d="M2273 781V1714"/>
        </g>
        <g class="grid">
          <path d="M1002 943h20M1002 1251h20M1002 1557h20M2420 943h22M2420 1251h22M2420 1557h22"/>
          <circle cx="1163" cy="748" r="34"/><circle cx="1387" cy="748" r="34"/><circle cx="1627" cy="748" r="34"/><circle cx="1951" cy="748" r="34"/><circle cx="2273" cy="748" r="34"/>
          <circle cx="1163" cy="1748" r="34"/><circle cx="1387" cy="1748" r="34"/><circle cx="1627" cy="1748" r="34"/><circle cx="1951" cy="1748" r="34"/><circle cx="2273" cy="1748" r="34"/>
          <circle cx="968" cy="943" r="34"/><circle cx="968" cy="1251" r="34"/><circle cx="968" cy="1557" r="34"/>
          <circle cx="2476" cy="943" r="34"/><circle cx="2476" cy="1251" r="34"/><circle cx="2476" cy="1557" r="34"/>
        </g>
        <g class="bubble">
          <text x="1161" y="766">1</text><text x="1385" y="766">2</text><text x="1625" y="766">3</text><text x="1949" y="766">4</text><text x="2271" y="766">5</text>
          <text x="1161" y="1766">1</text><text x="1385" y="1766">2</text><text x="1625" y="1766">3</text><text x="1949" y="1766">4</text><text x="2271" y="1766">5</text>
          <text x="964" y="963">C</text><text x="964" y="1270">B</text><text x="964" y="1577">A</text>
          <text x="2472" y="963">C</text><text x="2472" y="1270">B</text><text x="2472" y="1577">A</text>
        </g>
        <!-- elevation marks -->
        <g class="elev">
          <path class="fill" d="M715 1141l36 36-37 36a49 49 0 0 0 1-72z"/>
          <circle cx="680" cy="1176" r="49"/>
          <path d="M674 1177h14M763 1175h14"/>
          <path class="fill" d="M2902 1138l-38 36 38 36a49 49 0 0 1 0-72z"/>
          <circle cx="2938" cy="1173" r="49"/>
          <path d="M2931 1174h14M2838 1173h13"/>
        </g>
        <g class="movecur">
          <path d="M1839 1241v32M1823 1257h32"/>
          <path d="M1839 1240l5 7h-10zM1839 1274l5-7h-10zM1822 1257l7-5v10zM1856 1257l-7-5v10z"/>
        </g>
      </svg>

      <div class="mdi">
        <svg class="min" viewBox="0 0 26 10"><rect x="1" y="1" width="24" height="8" fill="#fff" stroke="#666" stroke-width="2"/></svg>
        <svg viewBox="0 0 24 24"><path d="M5 6V2h17v16h-4" fill="none" stroke="#555" stroke-width="3"/><rect x="2" y="6" width="16" height="16" fill="#fff" stroke="#555" stroke-width="3"/><rect x="8" y="12" width="4" height="5" fill="none" stroke="#555" stroke-width="2"/></svg>
        <svg viewBox="0 0 24 24"><path d="M2 2h7l3 4 3-4h7l-6 10 6 10h-7l-3-4-3 4H2l6-10z" fill="#fff" stroke="#555" stroke-width="3"/></svg>
      </div>
      <div class="navbar">
        <svg viewBox="0 0 66 228">
          <g fill="none" stroke="#aaa" stroke-width="3">
            <circle cx="52" cy="10" r="7" fill="#bbb"/><path d="M49 7l6 6M55 7l-6 6" stroke="#fff" stroke-width="2"/>
            <path d="M29 41h19v18a19 19 0 1 1-19-18z" fill="#f2f2f4"/><circle cx="29" cy="59" r="9"/><path d="M23 66l-6 6M35 66l6 6"/>
            <circle cx="52" cy="214" r="6"/><path d="M48 214h8"/>
          </g>
          <path d="M6 113h54" stroke="#bbb" stroke-width="2"/>
          <path d="M28 98h10l-5 6zM28 182h10l-5 6z" fill="#888"/>
          <rect x="19" y="131" width="20" height="20" fill="#b5cfa4" stroke="#9aa896" stroke-width="2"/>
          <circle cx="40" cy="151" r="8" fill="#fff" stroke="#999" stroke-width="3"/><path d="M46 156l6 6" stroke="#999" stroke-width="4"/>
          <text x="34" y="83">2D</text>
        </svg>
      </div>
    </div>
    <div class="vscroll">
      <svg><use href="#up"/></svg>
      <span class="thumb"></span>
      <svg class="down"><use href="#up"/></svg>
    </div>
    <div class="viewbar">
      <span class="scale">1 : 100</span>
      <button><svg><use href="#v-detail"/></svg></button>
      <button><svg><use href="#v-box"/></svg></button>
      <button><svg><use href="#v-sun"/></svg></button>
      <button><svg><use href="#v-shadow"/></svg></button>
      <button><svg viewBox="0 0 40 40"><use href="#v-crop"/><use href="#cross" x="18" y="18" width="22" height="22"/></svg></button>
      <button><svg viewBox="0 0 40 40"><use href="#v-crop"/><circle cx="31" cy="22" r="7" fill="#e4f1fc" stroke="#5e93cf" stroke-width="2"/></svg></button>
      <svg class="right"><use href="#up"/></svg>
      <span class="grip"></span>
    </div>
  </section>

  <aside class="browser">
    <div class="dockhead">项目浏览器 - 项目1</div>
    <div class="treebox">
      <ul class="tree">
        <li><div><button class="exp minus"></button><i></i><svg><use href="#t-view"/></svg>视图 (全部)</div>
          <ul>
            <li><div><button class="exp minus"></button><i></i>楼层平面</div>
              <ul>
                <li><div class="leaf"><i></i>场地</div></li>
                <li><div class="leaf"><i></i><b>标高 1</b></div></li>
                <li><div class="leaf"><i></i>标高 2</div></li>
              </ul>
            </li>
            <li><div><button class="exp"></button><i></i>天花板平面</div></li>
            <li><div><button class="exp"></button><i></i>三维视图</div></li>
            <li><div><button class="exp minus"></button><i></i>立面 (建筑立面)</div>
              <ul>
                <li><div class="leaf"><i></i>东</div></li>
                <li><div class="leaf"><i></i>北</div></li>
                <li><div class="leaf"><i></i>南</div></li>
                <li><div class="leaf"><i></i>西</div></li>
              </ul>
            </li>
            <li><div><button class="exp"></button><i></i>面积平面 (人防分区面积)</div></li>
            <li><div><button class="exp"></button><i></i>面积平面 (净面积)</div></li>
            <li><div><button class="exp"></button><i></i>面积平面 (总建筑面积)</div></li>
            <li><div><button class="exp"></button><i></i>面积平面 (防火分区面积)</div></li>
          </ul>
        </li>
        <li><div class="noexp"><i></i><svg><use href="#t-legend"/></svg>图例</div></li>
        <li><div><button class="exp"></button><i></i><svg><use href="#t-sched"/></svg>明细表/数量</div></li>
        <li><div class="noexp"><i></i><svg><use href="#t-sheet"/></svg>图纸 (全部)</div></li>
        <li><div><button class="exp"></button><i></i><svg><use href="#t-fam"/></svg>族</div></li>
        <li><div><button class="exp"></button><i></i><svg><use href="#t-group"/></svg>组</div></li>
        <li><div class="noexp"><i></i><svg><use href="#t-link"/></svg>Revit 链接</div></li>
      </ul>
      <div class="hscroll"><svg><use href="#up"/></svg><span></span></div>
    </div>
  </aside>
</main>

<div class="status">
  <p>择; 按 Tab 键并单击可选择其他项目; 按 Ctrl 键并单击可将新项目添加到选择集; 按 Shift 键</p>
  <div class="workset">
    <select aria-label="工作集"><option></option></select>
    <svg><use href="#up"/></svg>
  </div>
  <div class="selopts">
    <button><svg><use href="#s-link"/></svg></button>
    <button><svg><use href="#s-under"/></svg></button>
    <button><svg><use href="#s-pin"/></svg></button>
    <button><svg><use href="#s-face"/></svg></button>
    <button><svg><use href="#s-move"/></svg></button>
    <button><svg><use href="#s-busy"/></svg></button>
    <button class="cnt"><svg><use href="#filter"/></svg>:8</button>
  </div>
</div>

<div class="desktop"></div>

<footer class="taskbar">
  <input type="text" class="search" placeholder="在这里输入你要搜索的内容" aria-label="搜索">
  <button class="app"><svg viewBox="0 0 40 40"><circle cx="20" cy="20" r="17" fill="none" stroke="#111" stroke-width="5"/></svg></button>
  <button class="app"><svg viewBox="0 0 40 40"><path d="M2 1v6h25V1M2 39v-6h25v6M2 12h25v16H2zM36 1v38" fill="none" stroke="#222" stroke-width="2"/><rect x="33" y="13" width="6" height="6" fill="#222"/></svg></button>
  <button class="app run first bili"><svg viewBox="0 0 60 60"><rect width="60" height="60" fill="#f4678f"/><rect y="46" width="60" height="14" fill="#ec4574"/><path d="M16 13l7 6M44 13l-7 6" stroke="#fbb0c6" stroke-width="2"/><text x="30" y="40" class="glyph" font-size="19" fill="#fff">bilibili</text></svg></button>
  <button class="app run"><svg><use href="#wps"/></svg></button>
  <button class="app run rec"><svg viewBox="0 0 56 56"><circle cx="28" cy="28" r="26" fill="#151010" stroke="#eee" stroke-width="3"/><circle cx="28" cy="28" r="15" fill="#e8372b"/></svg></button>
  <button class="app run current"><svg viewBox="0 0 48 48"><text x="24" y="43" class="glyph" font-size="58" fill="#2c5f9e">R</text><path d="M5 2l9 7v27l-9 7z" fill="#4f8cc9"/></svg></button>
  <div class="tray">
    <button class="weather"><svg><use href="#cloud"/></svg><span>23°C</span><span>多云</span></button>
    <button><svg class="s"><use href="#upthin"/></svg></button>
    <button><svg><use href="#wps-s"/></svg></button>
    <button><svg><use href="#cloud2"/></svg></button>
    <button><svg><use href="#mic"/></svg></button>
    <button><svg><use href="#battery"/></svg></button>
    <button><svg><use href="#wifi"/></svg></button>
    <button><svg><use href="#volume"/></svg></button>
    <button class="ime">中</button>
    <div class="clock"><span>14:49</span><span>2022/3/</span></div>
  </div>
</footer>

<div class="subtitle">我们打开这个在建模的过程当中</div>

</body>
</html>
```
FILE: styles.css
```css
* { box-sizing: border-box; }
body {
  margin: 0;
  height: 100vh;
  display: flex;
  flex-direction: column;
  overflow: hidden;
  font-family: "Noto Sans", "Noto Sans CJK SC", sans-serif;
  font-size: 30px;
  line-height: 40px;
  color: #333;
  background: #f0f0f0;
}
button {
  display: flex;
  align-items: center;
  justify-content: center;
  padding: 0;
  border: 0;
  background: none;
  font: inherit;
  color: inherit;
  white-space: nowrap;
}
input, select { font: inherit; color: inherit; border-radius: 0; }
select { appearance: none; }
svg { width: 40px; height: 40px; flex: none; display: block; }
.sprite { width: 0; height: 0; position: absolute; }
.glyph { font-family: "Liberation Sans", sans-serif; font-weight: 700; text-anchor: middle; }
svg.c, .caret svg { width: 12px; height: 12px; }

/* title bar */
header { position: relative; overflow: hidden; background: #e7efd9; }
.titlebar { display: flex; height: 78px; background: #d6d6d6; }
.quick, .infocenter { display: flex; align-items: center; height: 70px; flex: none; }
.quick { padding-left: 14px; }
.w24 { width: 24px; }
.w45 { width: 45px; }
.w52 { width: 52px; }
.w60 { width: 60px; }
.sep { width: 2px; height: 56px; margin: 0 15px; background: #bfbfbf; }
.sep.narrow { margin: 0 8px; }
.redo svg { transform: scaleX(-1); opacity: .4; }
.pressed { height: 56px; background: #9cc8f5; border: 3px solid #2f6cb2; }
.custom svg { width: 20px; height: 20px; }
.title { flex: 1; display: flex; justify-content: center; gap: 42px; height: 70px; align-items: center; white-space: pre; }
.infocenter { width: 1216px; }
.tri { border: 9px solid transparent; border-left: 9px solid #444; border-right: 0; margin-right: 17px; }
.keyword {
  width: 450px;
  height: 56px;
  padding: 0 8px;
  border: 3px solid #333;
  background: #fff;
  font-size: 28px;
  font-style: italic;
}
.keyword::placeholder { color: #777; opacity: 1; }
.login { width: 196px; padding-left: 4px; justify-content: flex-start; }
.infocenter .sep { margin: 0 16px; }
.minimize { height: 6px; width: 20px; margin-left: 52px; background: #222; flex: none; }

/* tabs */
.tabs { display: flex; height: 50px; background: #d6d6d6; }
.tabs a { padding: 0 24px; line-height: 48px; color: #333; text-decoration: none; white-space: nowrap; }
.tabs a:first-child { padding-left: 14px; }
.tabs a.active { background: #e7efd9; color: #222; }
.collapse { width: 40px; margin-left: 52px; }
.collapse span { width: 36px; height: 24px; border: 3px solid #555; border-radius: 6px; background: #f5f5f5; display: flex; align-items: center; justify-content: center; }
.collapse span::before { content: ""; border: 7px solid transparent; border-bottom: 9px solid #444; border-top: 0; }
.collapse + .caret { margin-left: 4px; }

/* ribbon */
.ribbon { display: flex; height: 238px; }
.panel {
  display: flex;
  flex-direction: column;
  flex: none;
  background: #f5f5f7;
  border-right: 2px solid #e4e6de;
}
.panel h2 { margin: 0; height: 44px; line-height: 42px; font-size: 30px; font-weight: 400; text-align: center; }
.panel.ctx h2 { background: #e7efd9; }
.tools { display: flex; height: 194px; padding-top: 4px; }
.col { display: grid; grid-template-rows: 62px 62px 62px; width: 62px; }
.col.labels { width: auto; }
.col.labels button { justify-content: flex-start; gap: 11px; }
.col.labels svg.c { margin-left: 14px; }
.col.carets { width: 28px; }
.bigs { display: grid; grid-template: 87px 87px / repeat(4, 99px); padding-top: 5px; }
.bigs svg { width: 76px; height: 76px; }
.bigs svg.c { width: 12px; height: 12px; }
.bigs.one { grid-template-columns: 100px; }
.bigs.one.narrow { grid-template-columns: 30px; }
.bigs.two { grid-template-columns: 94px 94px; }
.big-label { flex-direction: column; justify-content: flex-start; padding-top: 8px; }
.big-label svg { width: 76px; height: 76px; margin-bottom: 12px; }
.big-label svg.c { width: 12px; height: 12px; margin: 6px 0 0; }

.p-prop { width: 54px; overflow: hidden; }
.p-prop .tools { flex-direction: column; gap: 10px; }
.p-prop h2 { text-align: left; }
.halfcard { position: relative; width: 42px; height: 84px; }
.halfcard i { display: block; width: 22px; height: 40px; margin-top: 8px; border: 3px solid #666; border-left: 0; background: #e8e8e8; }
.halfcard b { position: absolute; left: 0; top: 34px; width: 29px; height: 46px; border: 3px solid #555; border-left: 0; background: linear-gradient(#2c5c96, #2c5c96) 4px 6px / 15px 14px no-repeat #fff; }
.halfcard.on { background: #a4ccf4; border: 3px solid #2f6cb2; border-left: 0; }
.halfcard.on i { width: 18px; height: 74px; margin-top: 2px; background: #fff; }

.p-clip { width: 190px; }
.paste { width: 120px; padding: 8px 0 0 6px; color: #b0b0b0; }
.paste svg { width: 64px; }
.p-geo { width: 426px; }
.p-geo .labels { width: 262px; padding-left: 14px; }
.p-mod { width: 598px; padding-left: 2px; }
.p-mod .bigs { width: 400px; }
.del { width: 32px; height: 32px; }
.p-view { width: 162px; }
.p-view .carets { width: 26px; }
.p-meas { width: 140px; }
.p-create { width: 209px; padding: 0 7px; }
.p-datum { width: 107px; margin-left: 2px; border-left: 6px solid #e7efd9; }
.p-datum .tools { justify-content: center; }
.p-sel { width: 286px; border-left: 3px solid #e7efd9; }
.filter { width: 112px; padding-top: 16px; }
.filter svg { width: 64px; height: 60px; margin-bottom: 20px; }
.p-sel .labels { margin-left: 4px; padding-left: 24px; border-left: 2px solid #aaa; height: 186px; }
.p-sel .labels button { gap: 14px; }
button:disabled { color: #b0b0b0; }

/* options bar */
.options { display: flex; height: 62px; padding: 6px 0 0 32px; }
.options button { margin-left: 27px; width: 202px; border: 2px solid #888; border-bottom: 0; background: #f5f5f7; color: #222; }
.options::before { content: ""; width: 2px; height: 52px; background: #888; }
.watermark {
  position: absolute;
  right: -42px;
  top: 82px;
  font-size: 134px;
  line-height: 190px;
  font-weight: 700;
  color: rgba(125, 122, 115, .42);
  white-space: nowrap;
}

/* docked panels and view */
main { flex: 1; min-height: 0; display: grid; grid-template-columns: 392px 1fr 280px; background: #f0f0f0; }
.dockhead { height: 54px; line-height: 54px; background: #c1cee0; color: #222; padding-left: 8px; white-space: nowrap; overflow: hidden; flex: none; }
.props, .browser { display: flex; flex-direction: column; min-width: 0; min-height: 0; }
.props .dockhead { display: flex; justify-content: flex-end; padding-right: 12px; }
.dockhead svg { width: 20px; height: 20px; }
.typesel {
  justify-content: space-between;
  height: 182px;
  width: 388px;
  margin-top: 6px;
  padding: 0 6px 0 2px;
  border: solid #ccc;
  border-width: 0 2px 2px 0;
  border-top: 4px solid #777;
  background: #f2f1f2;
  text-align: left;
  line-height: 39px;
  color: #555;
  flex: none;
}
.typesel svg { width: 20px; height: 18px; }
.instance { display: flex; align-items: center; height: 60px; width: 388px; background: #f2f1f2; flex: none; }
.instance select { width: 197px; height: 56px; border: 2px solid #aaa; border-left: 0; background: #e2e2e2; }
.instance .chev { width: 20px; height: 14px; margin: 0 12px 0 -32px; transform: rotate(180deg); }
.instance button { gap: 10px; padding-left: 12px; color: #111; }
.instance button svg { width: 32px; height: 34px; }
.props table { width: 388px; border-collapse: collapse; table-layout: fixed; background: #fff; flex: none; }
.props tr { height: 48px; }
.props th { background: #dedede; padding: 0; }
.props th svg { width: 12px; height: 20px; margin: 0 13px 12px auto; }
.props td { padding: 0; border: 2px dotted #aaa; }
.props td:first-child { border-left: 0; }
.name { width: 91px; }
.assoc { width: 32px; }
.val input { display: block; width: 100%; height: 46px; padding: 0 2px; border: 3px solid #222; background: #fff; }
.blank { flex: 1; width: 388px; background: #fefefe; }
.apply { height: 62px; padding: 6px 8px 8px 0; display: flex; justify-content: flex-end; background: #f1f1f1; flex: none; }
.apply button { width: 196px; background: #cdcdcd; border: 2px solid #c4c4c4; color: #999; }

.view {
  display: grid;
  grid-template: minmax(0, 1fr) 46px / minmax(0, 1fr) 38px;
  margin: 0 12px 0 10px;
  border: solid #777;
  border-width: 4px 0 0 3px;
  background: #fff;
}
.canvas { position: relative; background: #fefefe; min-height: 0; }
.drawing { width: 100%; height: 100%; }
.grid { fill: none; stroke: #35547f; stroke-width: 2; }
.dash { stroke-dasharray: 106 26 26 27; }
.bubble { font-family: "Liberation Serif", serif; font-size: 52px; fill: #3a63a5; text-anchor: middle; }
.elev { fill: none; stroke: #333; stroke-width: 2; }
.elev .fill { fill: #000; }
.movecur { fill: #666; stroke: #666; stroke-width: 2; }
.mdi { position: absolute; right: 12px; top: 16px; display: flex; align-items: center; gap: 12px; }
.mdi svg { width: 24px; height: 24px; }
.mdi svg.min { width: 26px; height: 10px; margin-top: 8px; }
.navbar { position: absolute; right: 4px; top: 56px; width: 72px; height: 236px; border: 4px solid #c9c9c9; border-radius: 12px; background: #f5f5f7; }
.navbar svg { width: 64px; height: 228px; }
.navbar text { font: 700 18px "Liberation Sans", sans-serif; fill: #6a9bc9; }
.vscroll { display: flex; flex-direction: column; align-items: center; justify-content: space-between; padding: 14px 0; background: #f1f1f1; }
.vscroll svg, .viewbar .right, .hscroll svg { width: 20px; height: 14px; }
.vscroll .down { transform: rotate(180deg); }
.thumb { width: 38px; height: 42px; background: #cdcdcd; }
.viewbar { grid-column: 1 / 3; display: flex; align-items: center; padding: 0 6px 4px 54px; background: #f1f1f1; border-bottom: 2px solid #fff; }
.scale { width: 150px; padding-top: 4px; font-family: "Liberation Mono", monospace; font-size: 28px; white-space: pre; color: #222; }
.viewbar button { width: 56px; }
.viewbar .right { margin-left: auto; transform: rotate(90deg); }
.grip {
  width: 24px;
  height: 24px;
  margin: 12px 0 0 26px;
  background: repeating-linear-gradient(90deg, #bbb 0 5px, transparent 5px 9px);
  clip-path: polygon(100% 0, 100% 100%, 0 100%);
}

/* project browser */
.treebox { flex: 1; display: flex; flex-direction: column; margin: 4px 0; border: solid #777; border-width: 4px 0 0 4px; background: #fefefe; overflow: hidden; min-height: 0; }
.tree, .tree ul { list-style: none; margin: 0; padding: 0; }
.tree { flex: 1; padding-left: 8px; color: #222; white-space: nowrap; }
.tree ul { margin-left: 52px; }
.tree li { position: relative; }
.tree li::before { content: ""; position: absolute; left: 12px; top: 0; bottom: 0; border-left: 2px dotted #aaa; }
.tree li:last-child::before { bottom: auto; height: 22px; }
.tree > li:first-child::before { top: 22px; }
.tree div { display: flex; align-items: center; height: 44px; line-height: 44px; }
.tree i { width: 24px; margin-right: 6px; border-top: 2px dotted #aaa; flex: none; }
.tree > li > div i { width: 18px; margin-right: 0; }
.tree > li > div.noexp i { width: 31px; margin-left: 13px; }
.tree .leaf i { width: 37px; margin: 0 7px 0 13px; }
.tree svg { width: 38px; height: 38px; margin-right: 14px; }
.tree b { margin-left: -6px; padding: 0 10px 0 6px; background: #e2e2e4; }
.exp {
  position: relative;
  width: 26px;
  height: 26px;
  border: 2px solid #999;
  background: linear-gradient(#4a5a85, #4a5a85) center / 18px 2px no-repeat, linear-gradient(#4a5a85, #4a5a85) center / 2px 18px no-repeat, linear-gradient(135deg, #fff, #dcdce6);
  flex: none;
}
.exp.minus { background: linear-gradient(#4a5a85, #4a5a85) center / 18px 2px no-repeat, linear-gradient(135deg, #fff, #dcdce6); }
.hscroll { display: flex; align-items: center; height: 40px; padding-left: 8px; background: #f1f1f1; }
.hscroll svg { transform: rotate(-90deg); margin-right: 12px; }
.hscroll span { flex: 1; height: 40px; background: #cdcdcd; }

/* status bar */
.status { display: flex; align-items: center; height: 66px; padding-bottom: 4px; border-top: 3px solid #999; background: #d6d6d6; overflow: hidden; flex: none; }
.status p { margin: 0; width: 1282px; overflow: hidden; white-space: nowrap; color: #666; flex: none; }
.workset { width: 1270px; display: flex; align-items: center; flex: none; }
.workset select { width: 100%; height: 44px; border: 0; background: #fff; }
.workset svg { width: 16px; height: 14px; margin-left: -26px; transform: rotate(180deg); opacity: .5; }
.selopts { display: flex; margin-left: auto; padding-right: 41px; }
.selopts button { width: 60px; }
.selopts .cnt { width: auto; gap: 4px; padding-left: 5px; color: #222; }
.selopts .cnt svg { width: 40px; height: 38px; }

.desktop { height: 44px; border-top: 3px solid #a9d8f5; background: linear-gradient(90deg, #12a3fd, #0f9af6 35%, #0b62dc 70%, #0b3fb8); flex: none; }

/* taskbar */
.taskbar { display: flex; height: 100px; border-top: 2px solid #b4e3fb; background: linear-gradient(90deg, #d2e6f3 30%, #d8def0 90%); overflow: hidden; flex: none; }
.search { width: 786px; height: 96px; padding: 0 28px 4px; border: 0; background: #fff; font-size: 38px; flex: none; }
.search::placeholder { color: #444; opacity: 1; }
.app { width: 120px; flex: none; }
.app.run { width: 102px; margin-right: 22px; border-bottom: 6px solid #0f6cbd; padding-top: 4px; }
.app.first { margin-left: 20px; }
.app.current { width: 122px; background: #edf3fd; margin-left: -10px; }
.run svg { width: 48px; height: 48px; }
.run.bili svg { width: 60px; height: 60px; }
.run.rec svg { width: 56px; height: 56px; }
.tray { display: flex; align-items: center; margin-left: auto; color: #222; }
.tray button { width: 60px; height: 98px; }
.tray .weather { width: 270px; justify-content: flex-start; gap: 20px; font-size: 38px; }
.tray .weather svg { width: 54px; height: 46px; }
.tray .ime { font-size: 34px; }
.tray svg.s { width: 32px; height: 22px; }
.clock { display: flex; flex-direction: column; width: 125px; padding-left: 18px; line-height: 46px; white-space: nowrap; overflow: hidden; }
.clock span:first-child { padding-left: 35px; }

/* video caption */
.subtitle {
  position: absolute;
  left: 0;
  right: 0;
  bottom: 118px;
  text-align: center;
  font-size: 110px;
  line-height: 160px;
  font-weight: 700;
  color: #fbe10f;
  -webkit-text-stroke: 22px #000;
  paint-order: stroke fill;
  white-space: nowrap;
}
```
